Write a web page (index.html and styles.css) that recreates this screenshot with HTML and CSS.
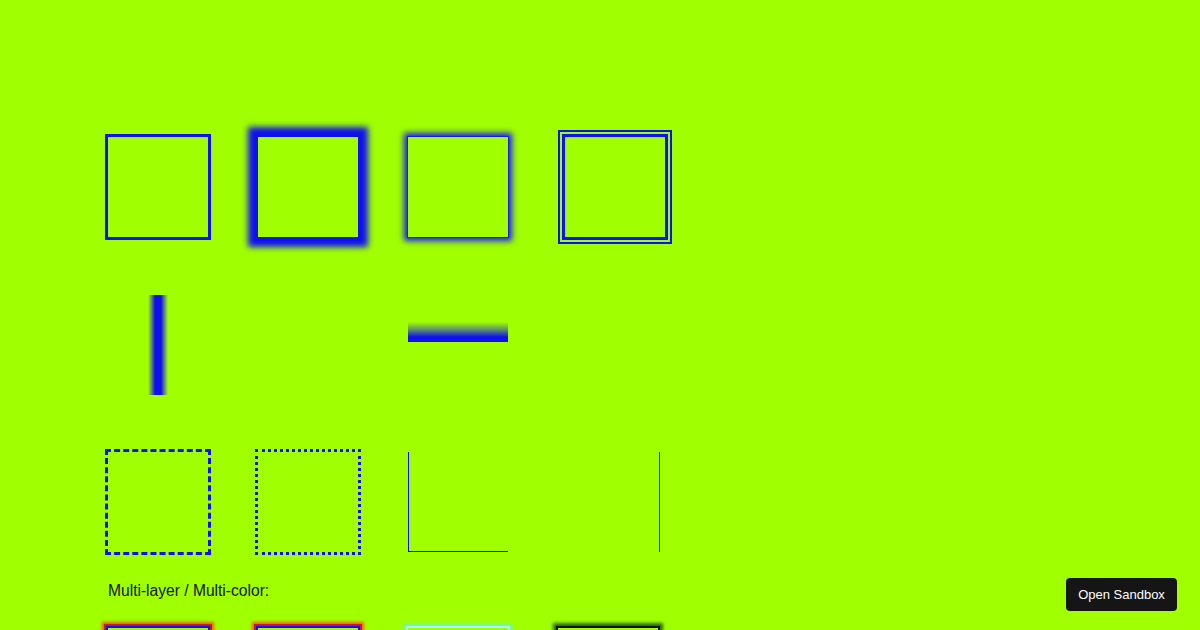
FILE: index.html
```html
<!DOCTYPE html>
<html>
<head>
<meta charset="utf-8">
<link rel="stylesheet" href="styles.css">
</head>
<body>
<div class="page">
  <div class="grid">
    <div class="box b-outline"></div>
    <div class="box b-spread"></div>
    <div class="box b-glow"></div>
    <div class="box b-double"></div>

    <div class="box cell-v"><div class="vbar"></div></div>
    <div class="box"></div>
    <div class="box cell-h"><div class="hbar"></div></div>
    <div class="box"></div>

    <div class="box b-dashed"></div>
    <div class="box b-dotted"></div>
    <div class="box b-corner"></div>
    <div class="box b-right"></div>
  </div>
  <p class="label">Multi-layer / Multi-color:</p>
  <div class="grid">
    <div class="box m1"></div>
    <div class="box m2"></div>
    <div class="box m3"></div>
    <div class="box m4"></div>
  </div>
</div>
<button class="sandbox">Open Sandbox</button>
</body>
</html>
```

FILE: styles.css
```css
html, body {
  margin: 0;
  padding: 0;
  height: 100%;
  overflow: hidden;
  background: #a0ff00;
}

.page {
  padding: 137px 0 0 108px;
  font-family: "Liberation Sans", Arial, sans-serif;
}

.grid {
  display: grid;
  grid-template-columns: repeat(4, 100px);
  grid-auto-rows: 100px;
  column-gap: 50px;
  row-gap: 57.5px;
}

.box {
  width: 100px;
  height: 100px;
}

.b-outline {
  outline: 3px solid #1010ff;
}

.b-spread {
  box-shadow: 0 0 6px 10px #1010ee;
}

.b-glow {
  box-shadow: 0 0 0 1px #1a1af0, 0 0 6px 4px #1a1af0;
}

.b-double {
  margin-left: 7px;
  box-shadow: 0 0 0 3px #1010ff, 0 0 0 5px #a0ff00, 0 0 0 7px #1010ff;
}

.cell-v {
  display: flex;
  justify-content: center;
}

.vbar {
  width: 20px;
  height: 100px;
  margin-left: -1px;
  background: linear-gradient(to right, rgba(16,16,255,0) 0%, rgba(40,60,200,0.6) 18%, #1010ee 35%, #1010ee 65%, rgba(40,60,200,0.6) 82%, rgba(16,16,255,0) 100%);
}

.hbar {
  margin-top: 27px;
  width: 100px;
  height: 20px;
  background: linear-gradient(to bottom, rgba(16,16,255,0) 0%, rgba(40,60,200,0.6) 40%, #1010ee 75%, #1010ee 100%);
}

.b-dashed {
  outline: 3px dashed #1010ff;
}

.b-dotted {
  outline: 3px dotted #1010ff;
}

.b-corner {
  box-sizing: border-box;
  border-left: 1px solid #1010ff;
  border-bottom: 1px solid #1010ff;
}

.b-right {
  width: 101px;
  border-right: 1px solid #1a1ad0;
}

.label {
  margin: 30px 0 28px 0;
  font-size: 15.6px;
  line-height: 18px;
  color: #151515;
}

.m1 {
  box-shadow: 0 0 0 2px #1010ff, 0 0 0 4px #c02000, 0 0 3px 6px #f06000;
}

.m2 {
  box-shadow: 0 0 0 2px #1010ff, 0 0 0 4px #d01040, 0 0 3px 6px #ff6000;
}

.m3 {
  box-shadow: 0 0 0 2px #b0ffff, 0 0 3px 4px #60ffc0;
}

.m4 {
  box-shadow: 0 0 0 2px #111111, 0 0 3px 5px #2a7000;
}

.sandbox {
  position: fixed;
  right: 23px;
  bottom: 19px;
  width: 111px;
  height: 33px;
  padding: 0;
  border: none;
  border-radius: 4px;
  background: #151515;
  color: #ffffff;
  font-family: "Liberation Sans", Arial, sans-serif;
  font-size: 13px;
  cursor: pointer;
}
```
